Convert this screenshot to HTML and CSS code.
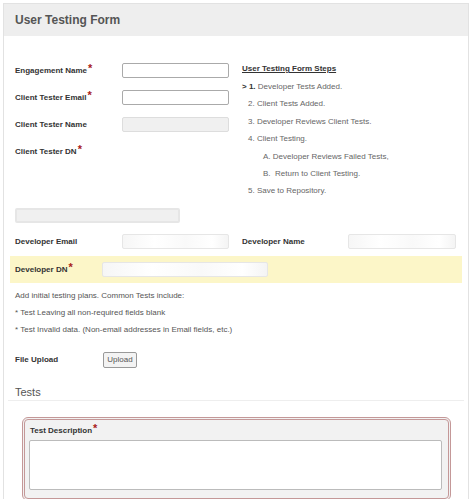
FILE: index.html
```html
<!DOCTYPE html>
<html lang="en">
<head>
    <meta charset="UTF-8">
    <meta name="viewport" content="width=device-width, initial-scale=1.0">
    <title>User Testing Form</title>
    <link rel="stylesheet" href="styles.css">
</head>
<body>

<div class="panel">
    <div class="panel-header">User Testing Form</div>

    <div class="panel-body">
        <div class="top">
            <!-- Engagement fields -->
            <div class="fields">
                <div class="row">
                    <label>Engagement Name<span class="req">*</span></label>
                    <input type="text" class="box">
                </div>
                <div class="row">
                    <label>Client Tester Email<span class="req">*</span></label>
                    <input type="text" class="box">
                </div>
                <div class="row">
                    <label>Client Tester Name</label>
                    <input type="text" class="box" disabled>
                </div>
                <div class="row">
                    <label>Client Tester DN<span class="req">*</span></label>
                </div>
                <input type="text" class="box wide" disabled>
            </div>

            <!-- Steps -->
            <div class="steps">
                <h4>User Testing Form Steps</h4>
                <ul>
                    <li class="current"><b>&gt; 1.</b> Developer Tests Added.</li>
                    <li>2. Client Tests Added.</li>
                    <li>3. Developer Reviews Client Tests.</li>
                    <li>4. Client Testing.</li>
                    <li class="sub">A. Developer Reviews Failed Tests,</li>
                    <li class="sub">B.&nbsp;&nbsp;Return to Client Testing.</li>
                    <li>5. Save to Repository.</li>
                </ul>
            </div>
        </div>

        <div class="row dev-row">
            <label>Developer Email</label>
            <input type="text" class="box blurred" disabled>
            <label class="second">Developer Name</label>
            <input type="text" class="box blurred name" disabled>
        </div>

        <div class="row highlight">
            <label class="dn-label">Developer DN<span class="req">*</span></label>
            <input type="text" class="box blurred dn" disabled>
        </div>

        <div class="notes">
            <p>Add initial testing plans. Common Tests include:</p>
            <p>* Test Leaving all non-required fields blank</p>
            <p>* Test Invalid data. (Non-email addresses in Email fields, etc.)</p>
        </div>

        <div class="row upload-row">
            <label class="upload-label">File Upload</label>
            <button class="upload-btn">Upload</button>
        </div>

        <h3 class="section-title">Tests</h3>

        <div class="test-card">
            <label>Test Description<span class="req">*</span></label>
            <textarea></textarea>
        </div>
    </div>
</div>

</body>
</html>
```

FILE: styles.css
```css
body {
    font-family: "Liberation Sans", Arial, sans-serif;
    font-size: 8px;
    color: #444;
    background-color: #fff;
    margin: 0;
    padding: 0;
}

.panel {
    margin: 3px 5px 0 3px;
    border: 1px solid #e2e2e2;
    border-bottom: none;
}

.panel-header {
    background-color: #eeeeee;
    height: 32px;
    line-height: 32px;
    padding-left: 11px;
    font-size: 12px;
    font-weight: bold;
    color: #555;
}

.panel-body {
    padding: 21px 11px 0 11px;
}

.top {
    display: flex;
}

.fields {
    width: 214px;
}

.row {
    display: flex;
    align-items: center;
    height: 27px;
}

.row label {
    width: 107px;
    font-weight: bold;
    color: #333;
}

.req {
    color: #a8201a;
    font-size: 11px;
    line-height: 0;
    vertical-align: 1px;
    margin-left: 1px;
}

.box {
    box-sizing: border-box;
    width: 107px;
    height: 15px;
    margin: 0;
    padding: 0 3px;
    border: 1px solid #aaa;
    border-radius: 2px;
    background-color: #fff;
    outline: none;
}

.box:disabled {
    background-color: #f0f0f0;
    border-color: #ddd;
}

.fields .wide {
    display: block;
    width: 165px;
    margin-top: 43px;
    border: 2px solid #e6e6e6;
}

.steps {
    margin-left: 13px;
    margin-top: 3px;
    color: #666;
}

.steps h4 {
    margin: 0;
    font-size: 8px;
    line-height: 17px;
    color: #333;
    text-decoration: underline;
}

.steps ul {
    list-style: none;
    padding: 0;
    margin: 0;
    padding-top: 1px;
}

.steps li {
    line-height: 17.4px;
    padding-left: 6px;
}

.steps li.current {
    padding-left: 0;
}

.steps li.current b {
    color: #333;
}

.steps li.sub {
    padding-left: 21px;
}

.dev-row {
    margin-top: 5px;
}

.dev-row .second {
    margin-left: 13px;
    width: 106px;
}

.blurred:disabled {
    background: linear-gradient(90deg, #f6f6f6, #fff 30%, #f9f9f9 60%, #fff 85%, #f4f4f4);
    border-color: #e6e6e6;
}

.name {
    width: 108px;
}

.highlight {
    background-color: #fcf6c8;
    margin: 1px -5px 0 -5px;
    padding: 0 5px;
}

.highlight .dn-label {
    width: 87px;
}

.dn {
    width: 166px;
}

.notes {
    margin-top: 4px;
    color: #555;
}

.notes p {
    margin: 0;
    line-height: 17px;
}

.upload-row {
    margin-top: 13px;
    height: 17px;
}

.upload-row .upload-label {
    width: 88px;
}

.upload-btn {
    font-family: "Liberation Sans", Arial, sans-serif;
    font-size: 8px;
    color: #555;
    height: 16px;
    width: 34px;
    padding: 0;
    border: 1px solid #999;
    border-radius: 2px;
    background-color: #f3f3f3;
}

.section-title {
    margin: 17px -7px 0 -7px;
    padding-left: 7px;
    font-size: 11px;
    font-weight: normal;
    line-height: 15px;
    color: #555;
    border-bottom: 1px solid #eee;
}

.test-card {
    margin: 16px 6px 0 7px;
    border: 3px double #c49898;
    border-radius: 6px;
    background-color: #f2f2f2;
    padding: 5px 6px 8px 4px;
}

.test-card label {
    display: block;
    padding-left: 1px;
    font-weight: bold;
    color: #333;
    line-height: 12px;
}

.test-card textarea {
    display: block;
    box-sizing: border-box;
    width: 100%;
    height: 50px;
    margin-top: 3px;
    border: 1px solid #bbb;
    border-radius: 2px;
    background-color: #fff;
    resize: none;
}
```
